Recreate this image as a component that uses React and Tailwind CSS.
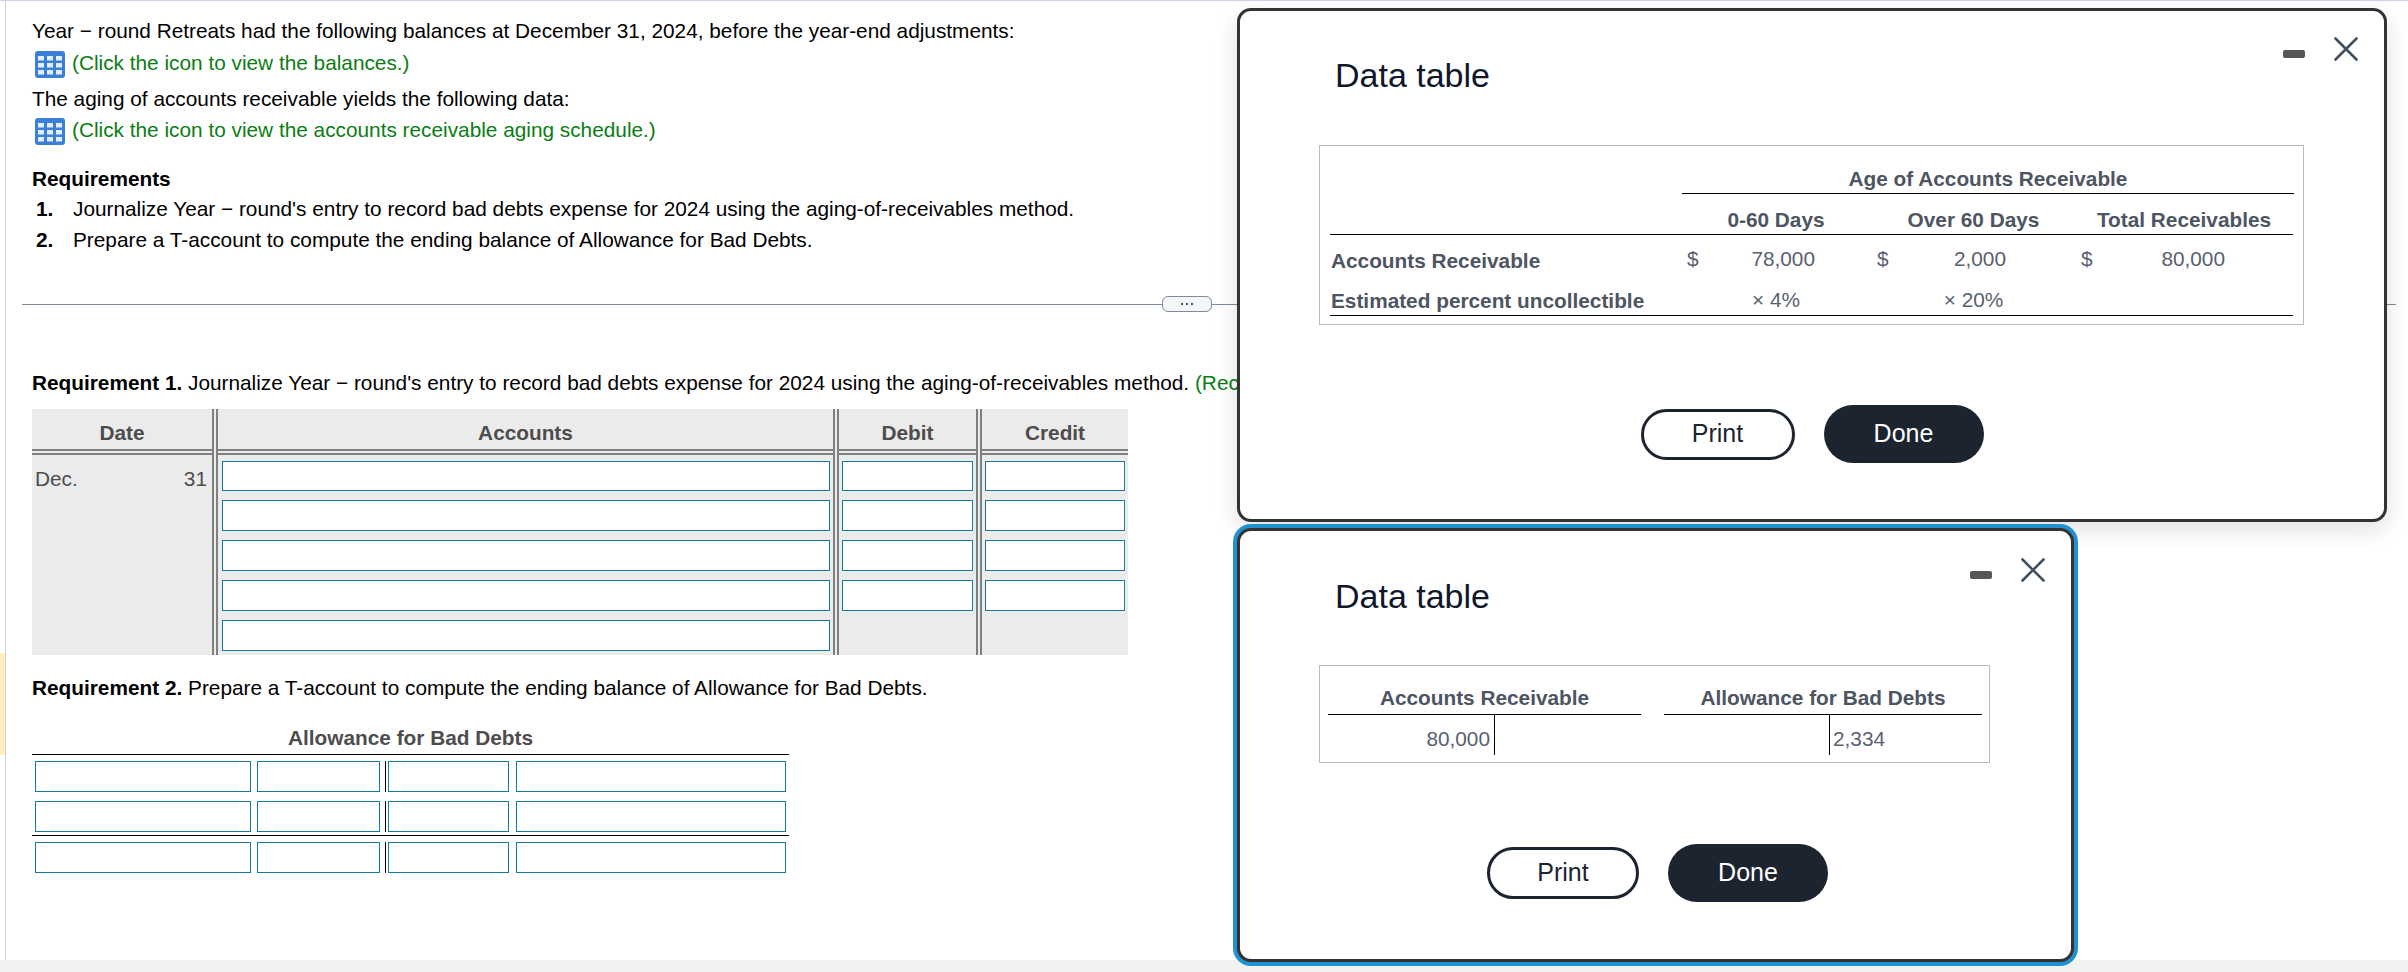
const AGE_COLS = "grid grid-cols-[352px_193px_205px_214px]"

const TableIcon = ({ className }) => (
  <svg className={className} viewBox="0 0 30 27" width="30" height="27">
    <rect x="0" y="0" width="30" height="27" rx="3" fill="#3b7fd9" />
    {[5, 12, 19].map((y) =>
      [3, 12, 21].map((x) => <rect key={`${x}-${y}`} x={x} y={y} width="6" height="4.5" fill="#e4eefb" />)
    )}
  </svg>
)

const Box = ({ className = "" }) => (
  <input type="text" className={`block border border-[#157a99] bg-white outline-none ${className}`} />
)

const WindowControls = () => (
  <div className="flex items-start gap-[29px]">
    <div className="mt-[13px] h-2 w-[22px] rounded-[2px] bg-[#555555]" />
    <svg className="text-[#3f5060]" width="24" height="24" viewBox="0 0 24 24" fill="none" stroke="currentColor" strokeWidth="2.6" strokeLinecap="round">
      <path d="M1.5 1.5 22.5 22.5M22.5 1.5 1.5 22.5" />
    </svg>
  </div>
)

const Buttons = ({ printClass = "h-[51px] w-[154px]" }) => (
  <div className="flex items-center justify-center gap-[29px]">
    <button className={`rounded-full border-[3px] border-[#1c2430] bg-white text-[25px] text-[#1c2430] ${printClass}`}>Print</button>
    <button className="h-[58px] w-[160px] rounded-full bg-[#1c2430] text-[25px] text-white">Done</button>
  </div>
)

const JournalColumn = ({ title, width, rows, inputClass, padClass, last }) => (
  <div className={`flex flex-col ${width} ${last ? "" : "border-r-[6px] border-double border-[#808080]"}`}>
    <div className="flex h-[46px] items-center justify-center border-b-[6px] border-double border-[#808080] pt-[8px] text-[20.8px] font-bold text-[#4d4d4d]">
      {title}
    </div>
    <div className={`flex h-[200px] flex-col gap-[9px] pt-[6px] ${padClass}`}>
      {Array.from({ length: rows }).map((_, i) => (
        <Box key={i} className={`h-[31px] first:h-[30px] ${inputClass}`} />
      ))}
    </div>
  </div>
)

const TRow = ({ className = "" }) => (
  <div className={`flex ${className}`}>
    <div className="flex w-[354px] gap-[6px] border-r border-black pl-[3px]">
      <Box className="h-[31px] w-[216px]" />
      <Box className="h-[31px] w-[123px]" />
    </div>
    <div className="flex gap-[7px] pl-[2px]">
      <Box className="h-[31px] w-[121px]" />
      <Box className="h-[31px] w-[270px]" />
    </div>
  </div>
)

const Line = ({ children, className = "" }) => (
  <div className={`flex h-7 items-center whitespace-pre text-[20.8px] leading-7 text-black ${className}`}>{children}</div>
)

const AgingModal = () => (
  <div className="absolute left-[1237px] top-[8px] h-[514px] w-[1150px] rounded-[14px] border-[3px] border-[#333333] bg-white shadow-[0_8px_24px_rgba(0,0,0,0.12)]">
    <div className="flex h-[134px] items-start justify-between pl-[95px] pr-[26px] pt-[26px]">
      <h2 className="mt-[18px] text-[34px] font-normal leading-10 text-[#0f172a]">Data table</h2>
      <WindowControls />
    </div>
    <div className="ml-[79px] h-[180px] w-[985px] border border-[#bbbbbb] px-[10px] text-[20.8px] leading-6 text-[#596170]">
      <div className={AGE_COLS}>
        <div />
        <div className="col-span-3 flex h-[48px] items-end justify-center border-b border-black pb-[2px] font-bold text-[#4d5562]">
          Age of Accounts Receivable
        </div>
      </div>
      <div className={`${AGE_COLS} h-[41px] items-end border-b border-black pb-[2px] text-center font-bold text-[#4d5562]`}>
        <div />
        <div className="pr-[5px]">0-60 Days</div>
        <div className="pr-[8px]">Over 60 Days</div>
        <div className="pr-[6px]">Total Receivables</div>
      </div>
      <div className={`${AGE_COLS} h-[40px] pt-[12px]`}>
        <div className="ml-[1px] mt-[2px] font-bold text-[#4d5562]">Accounts Receivable</div>
        <div className="flex justify-between pl-[5px] pr-[60px]"><span>$</span><span>78,000</span></div>
        <div className="flex justify-between pl-[2px] pr-[74px]"><span>$</span><span>2,000</span></div>
        <div className="flex justify-between pl-[1px] pr-[69px]"><span>$</span><span>80,000</span></div>
      </div>
      <div className={`${AGE_COLS} h-[41px] border-b border-black pt-[13px]`}>
        <div className="ml-[1px] mt-[1px] font-bold text-[#4d5562]">Estimated percent uncollectible</div>
        <div className="pr-[5px] text-center">× 4%</div>
        <div className="pr-[8px] text-center">× 20%</div>
        <div />
      </div>
    </div>
    <div className="mt-[80px]">
      <Buttons />
    </div>
  </div>
)

const TAccountModal = () => (
  <div className="absolute left-[1237px] top-[528px] h-[434px] w-[837px] rounded-[14px] border-[3px] border-[#333333] bg-white ring-4 ring-[#2092d0]">
    <div className="flex h-[134px] items-start justify-between pl-[95px] pr-[26px] pt-[27px]">
      <h2 className="mt-[18px] text-[34px] font-normal leading-10 text-[#0f172a]">Data table</h2>
      <WindowControls />
    </div>
    <div className="ml-[79px] grid h-[98px] w-[671px] grid-cols-[313px_318px] gap-x-[23px] border border-[#bbbbbb] px-[8px] text-[20.8px] leading-6 text-[#596170]">
      <div>
        <div className="border-b border-black pb-[4px] pt-[20px] text-center font-bold text-[#4d5562]">Accounts Receivable</div>
        <div className="h-[40px] w-[167px] border-r border-black pr-[4px] pt-[12px] text-right">80,000</div>
      </div>
      <div>
        <div className="border-b border-black pb-[4px] pt-[20px] text-center font-bold text-[#4d5562]">Allowance for Bad Debts</div>
        <div className="flex">
          <div className="h-[40px] w-[166px] border-r border-black" />
          <div className="pl-[3px] pt-[12px]">2,334</div>
        </div>
      </div>
    </div>
    <div className="ml-[4px] mt-[81px]">
      <Buttons printClass="h-[52px] w-[152px]" />
    </div>
  </div>
)

export default function App() {
  return (
    <div className="relative h-[972px] w-[2408px] overflow-hidden bg-white font-['Liberation_Sans',Arial,sans-serif]">
      <div className="flex h-[960px] border-t border-[#ccd3e3]">
        {/* yellow marker down the left edge */}
        <div className="w-[5px] pt-[652px]">
          <div className="h-[102px] bg-[#fdeebc]" />
        </div>

        <div className="flex-1 border-l border-[#ccd3e3] pl-[26px] pt-[16px]">
          <Line>Year − round Retreats had the following balances at December 31, 2024, before the year-end adjustments:</Line>
          <Line className="mt-1">
            <TableIcon className="ml-[3px] mr-[7px] mt-[3px] shrink-0" />
            <span className="text-[#0a7d14]">(Click the icon to view the balances.)</span>
          </Line>
          <Line className="mt-2">The aging of accounts receivable yields the following data:</Line>
          <Line className="mt-[3px]">
            <TableIcon className="ml-[3px] mr-[7px] mt-[3px] shrink-0" />
            <span className="text-[#0a7d14]">(Click the icon to view the accounts receivable aging schedule.)</span>
          </Line>
          <Line className="mt-[21px] font-bold">Requirements</Line>
          <Line className="mt-[2px]">
            <span className="w-[41px] pl-[4px] font-bold">1.</span>Journalize Year − round's entry to record bad debts expense for 2024 using the aging-of-receivables method.
          </Line>
          <Line className="mt-[3px]">
            <span className="w-[41px] pl-[4px] font-bold">2.</span>Prepare a T-account to compute the ending balance of Allowance for Bad Debts.
          </Line>

          {/* divider with the collapse pill */}
          <div className="-ml-[10px] mt-[42px] flex h-[16px] items-center">
            <div className="h-px w-[1140px] bg-[#7f8a9a]" />
            <div className="flex h-[16px] w-[50px] items-center justify-center gap-[3px] rounded-md border border-[#7f8a9a] bg-[#f4f6fa]">
              <span className="size-[2px] bg-[#4b5563]" />
              <span className="size-[2px] bg-[#4b5563]" />
              <span className="size-[2px] bg-[#4b5563]" />
            </div>
            <div className="h-px w-[1184px] bg-[#7f8a9a]" />
          </div>

          <Line className="mt-[57px]">
            <span className="font-bold">Requirement 1.</span> Journalize Year − round's entry to record bad debts expense for 2024 using the aging-of-receivables method. <span className="text-[#0a7d14]">(Rec</span>
          </Line>

          <div className="mt-3 flex w-[1096px] bg-[#ebebeb]">
            <div className="flex w-[186px] flex-col border-r-[6px] border-double border-[#808080]">
              <div className="flex h-[46px] items-center justify-center border-b-[6px] border-double border-[#808080] pt-[8px] text-[20.8px] font-bold text-[#4d4d4d]">
                Date
              </div>
              <div className="flex justify-between pl-[3px] pr-[5px] pt-[12px] text-[20.8px] leading-6 text-[#4d4d4d]">
                <span>Dec.</span>
                <span>31</span>
              </div>
            </div>
            <JournalColumn title="Accounts" width="w-[621px]" rows={5} inputClass="w-[608px]" padClass="pl-[4px]" />
            <JournalColumn title="Debit" width="w-[143px]" rows={4} inputClass="w-[131px]" padClass="pl-[3px]" />
            <JournalColumn title="Credit" width="w-[146px]" rows={4} inputClass="w-[140px]" padClass="pl-[3px]" last />
          </div>

          <Line className="mt-[19px]">
            <span className="font-bold">Requirement 2.</span> Prepare a T-account to compute the ending balance of Allowance for Bad Debts.
          </Line>

          {/* T-account */}
          <div className="mt-[22px] w-[757px]">
            <div className="flex h-7 items-center justify-center text-[20.8px] font-bold text-[#4d4d4d]">Allowance for Bad Debts</div>
            <div className="mt-[2px] border-t border-black">
              <TRow className="pb-[4px] pt-[6px]" />
              <div className="border-b border-black">
                <TRow className="pb-[3px] pt-[5px]" />
              </div>
              <TRow className="pb-[3px] pt-[6px]" />
            </div>
          </div>
        </div>
      </div>
      <div className="h-[12px] bg-[#f2f2f2]" />

      <AgingModal />
      <TAccountModal />
    </div>
  )
}
